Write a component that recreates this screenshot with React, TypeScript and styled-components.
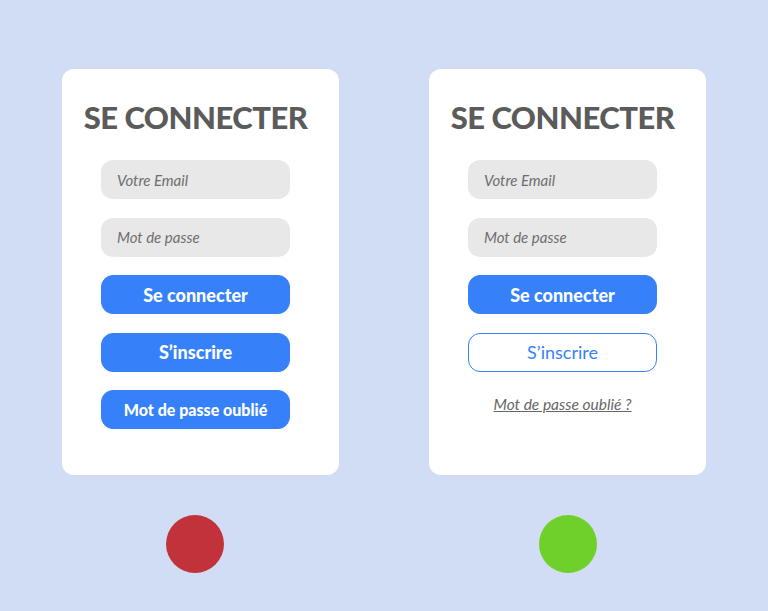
import React from 'react'
import styled, { createGlobalStyle } from 'styled-components'

const colors = {
  page: '#d1ddf4',
  white: '#ffffff',
  title: '#5b5b5b',
  field: '#e8e8e8',
  placeholder: '#6e6e6e',
  blue: '#3681fa',
  link: '#666666',
  red: '#c1323a',
  green: '#70d02b',
}

const GlobalStyle = createGlobalStyle`
  html, body {
    margin: 0;
    padding: 0;
    background: ${colors.page};
    font-family: 'Lato', 'Inter', sans-serif;
  }
`

const Page = styled.div`
  width: 768px;
  height: 611px;
  box-sizing: border-box;
  padding: 69px 62px 0;
  display: grid;
  grid-template-columns: 277px 277px;
  column-gap: 90px;
`

const Column = styled.div`
  display: flex;
  flex-direction: column;
  gap: 40px;
`

const Card = styled.div`
  height: 406px;
  box-sizing: border-box;
  background: ${colors.white};
  border-radius: 12px;
  padding: 28px 32px 0 22px;
  display: flex;
  flex-direction: column;
  align-items: center;
`

const Title = styled.h1`
  margin: 0 0 23px;
  color: ${colors.title};
  font-size: 31px;
  font-weight: 900;
  letter-spacing: -0.5px;
  line-height: 40px;
  white-space: nowrap;
`

const Stack = styled.div`
  display: flex;
  flex-direction: column;
  align-items: center;
  gap: 18.5px;
`

const Field = styled.div`
  width: 189px;
  height: 39px;
  box-sizing: border-box;
  border-radius: 12px;
  background: ${colors.field};
  padding: 0 16px;
  display: flex;
  align-items: center;
  color: ${colors.placeholder};
  font-size: 15px;
  font-style: italic;
`

const Button = styled.div<{ outline?: boolean; size?: number }>`
  width: 189px;
  height: 39px;
  box-sizing: border-box;
  border-radius: 12px;
  display: flex;
  align-items: center;
  justify-content: center;
  background: ${({ outline }) => (outline ? colors.white : colors.blue)};
  border: 1px solid ${colors.blue};
  color: ${({ outline }) => (outline ? colors.blue : colors.white)};
  font-size: ${({ size }) => size ?? 18}px;
  font-weight: ${({ outline }) => (outline ? 400 : 900)};
`

const ForgotLink = styled.a`
  margin-top: 5px;
  color: ${colors.link};
  font-size: 15.5px;
  font-style: italic;
  text-decoration: underline;
`

const Dot = styled.div<{ color: string; shift?: number }>`
  width: 58px;
  height: 58px;
  border-radius: 50%;
  background: ${({ color }) => color};
  align-self: center;
  margin-left: ${({ shift }) => shift ?? 0}px;
`

const App: React.FC = () => (
  <>
    <GlobalStyle />
    <Page>
      <Column>
        <Card>
          <Title>SE CONNECTER</Title>
          <Stack>
            <Field>Votre Email</Field>
            <Field>Mot de passe</Field>
            <Button>Se connecter</Button>
            <Button>S’inscrire</Button>
            <Button size={16}>Mot de passe oublié</Button>
          </Stack>
        </Card>
        <Dot color={colors.red} shift={-12} />
      </Column>
      <Column>
        <Card>
          <Title>SE CONNECTER</Title>
          <Stack>
            <Field>Votre Email</Field>
            <Field>Mot de passe</Field>
            <Button>Se connecter</Button>
            <Button outline size={18}>S’inscrire</Button>
            <ForgotLink>Mot de passe oublié ?</ForgotLink>
          </Stack>
        </Card>
        <Dot color={colors.green} />
      </Column>
    </Page>
  </>
)

export default App
